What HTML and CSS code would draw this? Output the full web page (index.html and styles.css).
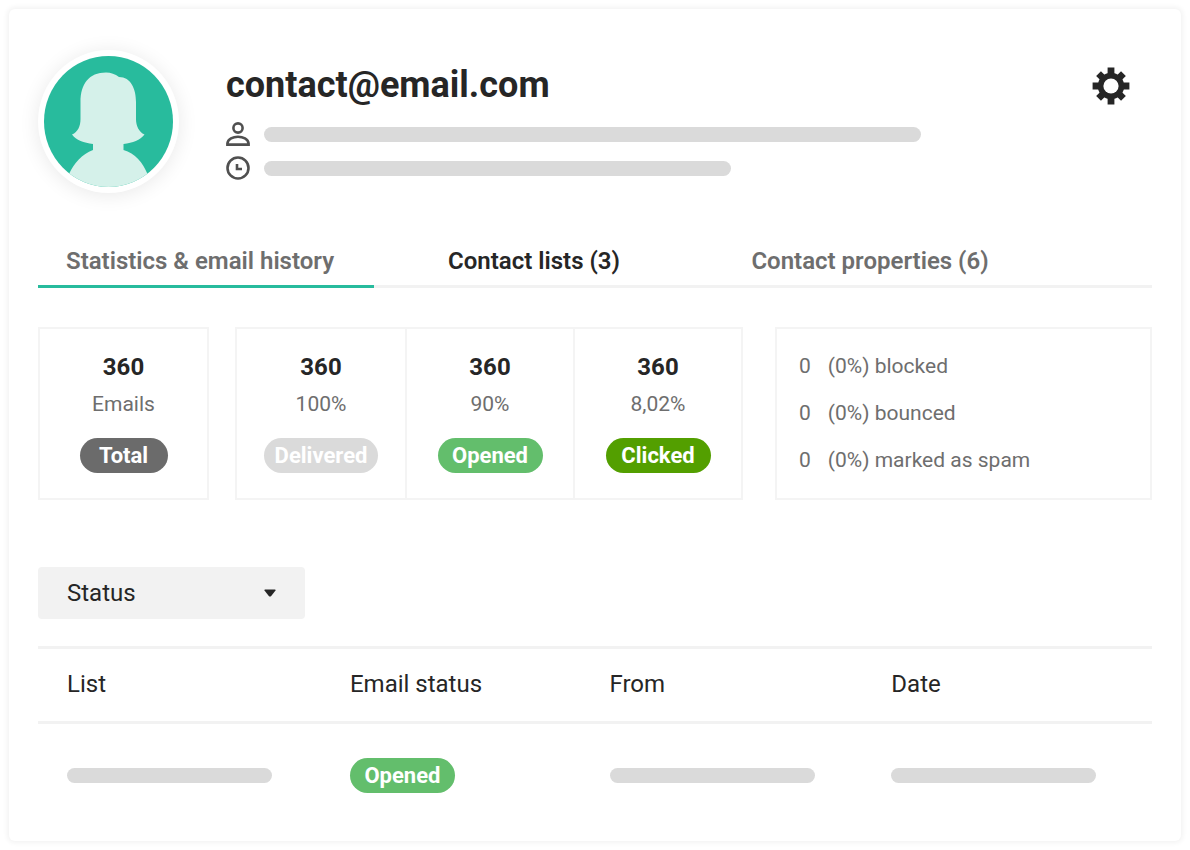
FILE: index.html
```html
<!DOCTYPE html>
<html lang="en">
<head>
<meta charset="utf-8">
<meta name="viewport" content="width=device-width, initial-scale=1">
<title>Contact details</title>
<link rel="stylesheet" href="styles.css">
</head>
<body>
<main class="card">
  <header class="profile">
    <div class="avatar">
      <svg viewBox="0 0 129 131" aria-hidden="true">
        <defs><clipPath id="disc"><ellipse cx="64.5" cy="65.5" rx="64.5" ry="65.5"/></clipPath></defs>
        <g clip-path="url(#disc)">
          <rect width="129" height="131" fill="#28bb9d"/>
          <path fill="#d5f1ea" d="M62 16.500C67 16.500 71 18 75 21C87 21 92 33 92 46V63C92 70 95 76 100.500 78.500C96 84 89 87 79.500 88V94C91 97 99 107 103.500 118L104 131H25V118C30 107 38 98 49 94V88C40 87 32 84 28 78.500C34 76 36.500 70 36.500 63V46C36.500 28 45 16.500 62 16.500Z"/>
        </g>
      </svg>
    </div>
    <div class="profile-info">
      <h1 class="profile-name">contact@email.com</h1>
      <div class="detail">
        <svg class="detail-icon" viewBox="0 0 24 24" fill="none" stroke="#505050" stroke-width="2.6" aria-hidden="true">
          <circle cx="12" cy="6" r="4.6"/>
          <path d="M1.400 22.600V21.500C2.500 12.500 21.500 12.500 22.600 21.500V22.600Z"/>
        </svg>
        <span class="placeholder placeholder-long"></span>
      </div>
      <div class="detail">
        <svg class="detail-icon" viewBox="0 0 24 24" fill="none" stroke="#505050" stroke-width="2.6" aria-hidden="true">
          <circle cx="12" cy="12" r="10.5"/>
          <path d="M11 8V13H16"/>
        </svg>
        <span class="placeholder placeholder-medium"></span>
      </div>
    </div>
    <button class="settings" type="button" aria-label="Settings">
      <svg viewBox="-19 -19 38 38" aria-hidden="true">
        <g fill="#262626">
          <path d="M-3.400 -18.400H3.400V18.400H-3.400ZM-18.400 -3.400V3.400H18.400V-3.400Z"/>
          <path transform="rotate(45)" d="M-3.400 -17.600H3.400V17.600H-3.400ZM-17.600 -3.400V3.400H17.600V-3.400Z"/>
          <circle r="13.2"/>
        </g>
        <circle r="7.6" fill="#fff"/>
      </svg>
    </button>
  </header>

  <nav class="tabs">
    <a class="tab tab-current" href="#history">Statistics &amp; email history</a>
    <a class="tab tab-strong" href="#lists">Contact lists (3)</a>
    <a class="tab" href="#properties">Contact properties (6)</a>
  </nav>

  <section class="stats" id="history">
    <div class="panel">
      <div class="stat"><strong class="stat-value">360</strong><span class="stat-note">Emails</span><span class="badge badge-total">Total</span></div>
    </div>
    <div class="panel panel-group">
      <div class="stat"><strong class="stat-value">360</strong><span class="stat-note">100%</span><span class="badge badge-delivered">Delivered</span></div>
      <div class="stat"><strong class="stat-value">360</strong><span class="stat-note">90%</span><span class="badge badge-opened">Opened</span></div>
      <div class="stat"><strong class="stat-value">360</strong><span class="stat-note">8,02%</span><span class="badge badge-clicked">Clicked</span></div>
    </div>
    <ul class="panel issues">
      <li class="issue"><span>0</span><span>(0%) blocked</span></li>
      <li class="issue"><span>0</span><span>(0%) bounced</span></li>
      <li class="issue"><span>0</span><span>(0%) marked as spam</span></li>
    </ul>
  </section>

  <div class="filter">
    <select class="filter-select" aria-label="Status"><option>Status</option></select>
    <svg class="filter-arrow" viewBox="0 0 12 8" aria-hidden="true"><path fill="#262626" d="M1 .5H11Q12 .5 11.500 1.400L7.200 7Q6 8.200 4.800 7L.5 1.400Q0 .5 1 .5Z"/></svg>
  </div>

  <table class="history">
    <colgroup><col class="col-list"><col class="col-status"><col class="col-from"><col></colgroup>
    <thead>
      <tr><th scope="col">List</th><th scope="col">Email status</th><th scope="col">From</th><th scope="col">Date</th></tr>
    </thead>
    <tbody>
      <tr>
        <td><span class="placeholder"></span></td>
        <td><span class="badge badge-opened">Opened</span></td>
        <td><span class="placeholder"></span></td>
        <td><span class="placeholder"></span></td>
      </tr>
    </tbody>
  </table>
</main>
</body>
</html>
```
FILE: styles.css
```css
* {
  box-sizing: border-box;
}

body {
  margin: 0;
  padding: 9px;
  background: #fff;
  color: #262626;
  font-family: Roboto, "Liberation Sans", sans-serif;
}

.card {
  padding: 41px 29px 30px;
  border-radius: 6px;
  background: #fff;
  box-shadow: 0 0 5px 2px rgba(0, 0, 0, 0.05);
}

/* Profile */
.profile {
  display: flex;
  align-items: flex-start;
}

.avatar {
  flex: none;
  width: 141px;
  height: 143px;
  padding: 6px;
  border-radius: 50%;
  background: #fff;
  box-shadow: 0 2px 20px rgba(0, 0, 0, 0.09);
}

.avatar svg {
  display: block;
  width: 129px;
  height: 131px;
}

.profile-info {
  flex: 1;
  padding: 13px 0 0 47px;
}

.profile-name {
  margin: 0 0 10px;
  font-size: 36px;
  font-weight: 700;
  line-height: 44px;
}

.detail {
  display: flex;
  align-items: center;
  gap: 14px;
  height: 34px;
}

.detail-icon {
  flex: none;
  width: 24px;
  height: 24px;
}

.placeholder {
  display: block;
  width: 205px;
  max-width: 100%;
  height: 15px;
  border-radius: 8px;
  background: #dadada;
}

.placeholder-long {
  width: 657px;
}

.placeholder-medium {
  width: 467px;
}

.settings {
  width: 38px;
  height: 38px;
  margin: 17px 22px 0 0;
  padding: 0;
  border: 0;
  background: none;
}

.settings svg {
  display: block;
}

/* Tabs */
.tabs {
  display: grid;
  grid-template-columns: 336fr 320fr 352fr 106fr;
  margin-top: 43px;
  box-shadow: inset 0 -3px #f2f2f2;
}

.tab {
  padding: 11px 0 10px;
  border-bottom: 3px solid transparent;
  color: #6e6e6e;
  font-size: 24px;
  font-weight: 600;
  line-height: 28px;
  text-align: center;
  text-decoration: none;
  white-space: nowrap;
}

.tab-current {
  padding-left: 28px;
  border-color: #28bb9d;
  text-align: left;
}

.tab-strong {
  color: #262626;
}

/* Statistics */
.stats {
  display: grid;
  grid-template-columns: 171fr 508fr 377fr;
  margin-top: 39px;
}

.panel {
  border: 2px solid #f4f4f4;
}

.stats {
  column-gap: 29px;
}

.panel-group {
  display: grid;
  grid-template-columns: repeat(3, 1fr);
  margin: 0 3px 0 -3px;
}

.stat {
  display: flex;
  flex-direction: column;
  align-items: center;
  padding: 24px 0 23px;
}

.stat + .stat {
  border-left: 2px solid #f4f4f4;
}

.stat-value {
  font-size: 24px;
  line-height: 28px;
}

.stat-note {
  margin: 10px 0 21px;
  color: #6e6e6e;
  font-size: 21px;
  line-height: 26px;
}

.badge {
  display: inline-block;
  min-width: 105px;
  padding: 0 11px;
  border-radius: 18px;
  color: #fff;
  font-size: 22px;
  font-weight: 700;
  line-height: 35px;
  text-align: center;
}

.badge-total {
  min-width: 88px;
  background: #6b6b6b;
}

.badge-delivered {
  background: #dadada;
}

.badge-opened {
  background: #63be6c;
}

.badge-clicked {
  background: #539f00;
}

.issues {
  margin: 0;
  padding: 14px 22px;
  list-style: none;
}

.issue {
  display: flex;
  gap: 17px;
  color: #6e6e6e;
  font-size: 21px;
  line-height: 47px;
}

/* Status filter */
.filter {
  position: relative;
  width: 267px;
  margin: 67px 0 27px;
}

.filter-select {
  display: block;
  width: 100%;
  height: 52px;
  padding: 0 29px;
  border: 0;
  border-radius: 4px;
  background: #f2f2f2;
  color: #262626;
  font: 24px Roboto, "Liberation Sans", sans-serif;
  appearance: none;
}

.filter-arrow {
  position: absolute;
  top: 22px;
  right: 29px;
  width: 12px;
  height: 8px;
  pointer-events: none;
}

/* History table */
.history {
  width: 100%;
  border-collapse: separate;
  border-spacing: 0;
  table-layout: fixed;
}

.col-list {
  width: 25.4%;
}

.col-status {
  width: 23.3%;
}

.col-from {
  width: 25.3%;
}

.history th {
  padding: 19px 0 21px 29px;
  border-top: 3px solid #f2f2f2;
  border-bottom: 3px solid #f2f2f2;
  font-size: 24px;
  font-weight: 400;
  line-height: 32px;
  text-align: left;
}

.history td {
  height: 87px;
  padding: 16px 0 0 29px;
}

.history .badge {
  display: block;
  width: 105px;
}
```
